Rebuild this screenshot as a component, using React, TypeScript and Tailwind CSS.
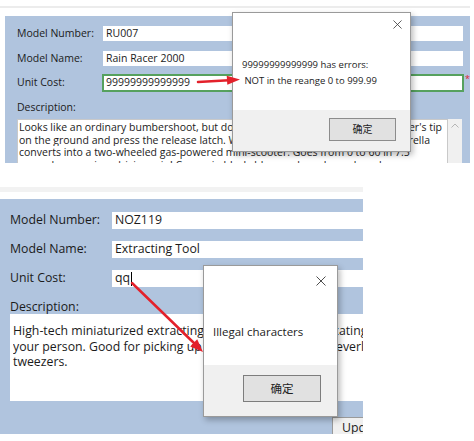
import React from 'react';

const CloseIcon = ({size}: {size: number}) => (
    <svg width={size} height={size} viewBox="0 0 10 10" className="block">
        <path d="M0.5 0.5L9.5 9.5M9.5 0.5L0.5 9.5" stroke="#3a3a3a" strokeWidth="0.9"/>
    </svg>
);

const TopField = ({label, value}: {label: string; value: string}) => (
    <div className="flex h-[15px] items-center">
        <span className="w-[86px] shrink-0">{label}</span>
        <div className="flex h-full w-[360px] items-center bg-white pl-[3px]">{value}</div>
    </div>
);

const BottomField = ({label, children}: {label: string; children: React.ReactNode}) => (
    <div className="flex h-[17px] items-center">
        <span className="w-[102px] shrink-0">{label}</span>
        <div className="flex h-full flex-1 items-center bg-white pl-[3px]">{children}</div>
    </div>
);

export default function App() {
    return (
        <div className="relative flex h-[441px] w-[474px] flex-col overflow-hidden bg-white font-['Open_Sans','Noto_Sans_CJK_SC',sans-serif] text-[#1b1b1b]">
            {/* first shot: range error */}
            <div className="relative flex h-[180px] shrink-0 flex-col">
                <div className="mt-[6px] h-[2px] w-[470px] bg-[#ececec]"/>
                <div className="ml-[5px] mt-[8px] h-[147px] w-[465px] overflow-hidden bg-[#b0c4de] pl-[12px] pt-[10px] text-[10.5px]">
                    <TopField label="Model Number:" value="RU007"/>
                    <div className="mt-[10px]"><TopField label="Model Name:" value="Rain Racer 2000"/></div>
                    <div className="mt-[8px] flex h-[18px] items-center">
                        <span className="w-[85px] shrink-0">Unit Cost:</span>
                        <div className="flex h-full w-[364px] items-center border-2 border-[#56a15e] bg-white pl-[2px]">99999999999999</div>
                        <span className="self-start pl-[1px] text-[9px] leading-[9px] text-[#e3212b]">*</span>
                    </div>
                    <div className="mt-[8px] h-[14px] leading-[14px]">Description:</div>
                    <div className="mt-[5px] flex h-[60px] w-[445px]">
                        <div className="w-[431px] border border-[#c9c9c9] bg-white pl-[1px] pr-[5px] pt-[1px] leading-[12.5px]">
                            <div className="flex whitespace-nowrap">
                                <span className="min-w-0 flex-1 overflow-hidden">Looks like an ordinary bumbershoot, but don't be fooled! Simply place Rain</span>
                                <span className="shrink-0">Racer's tip</span>
                            </div>
                            <div className="flex whitespace-nowrap pr-[12px]">
                                <span className="min-w-0 flex-1 overflow-hidden">on the ground and press the release latch. Within seconds, this ordinary rain</span>
                                <span className="shrink-0">umbrella</span>
                            </div>
                            <div className="overflow-hidden whitespace-nowrap">converts into a two-wheeled gas-powered mini-scooter. Goes from 0 to 60 in 7.5</div>
                            <div className="overflow-hidden whitespace-nowrap">seconds - even in a driving rain! Comes in black, blue, and candy-apple red.</div>
                        </div>
                        <div className="flex w-[14px] justify-center bg-[#f0f0f0] pt-[4px]">
                            <svg width="8" height="5" viewBox="0 0 8 5" className="block">
                                <path d="M0.5 4.5L4 1L7.5 4.5" fill="none" stroke="#b5b5b5" strokeWidth="1"/>
                            </svg>
                        </div>
                    </div>
                </div>

                <div className="absolute left-[232px] top-[12px] flex h-[140px] w-[179px] flex-col border border-[#9a9a9a] bg-white shadow-[2px_3px_6px_rgba(0,0,0,0.28)]">
                    <div className="flex justify-end pr-[8px] pt-[7px]"><CloseIcon size={9}/></div>
                    <div className="flex-1 whitespace-pre pl-[9px] pt-[28px] text-[9.5px] leading-[16px] text-[#222]">
                        <div>99999999999999 has errors:</div>
                        <div> NOT in the reange 0 to 999.99</div>
                    </div>
                    <div className="flex h-[41px] justify-end bg-[#f0f0f0] pr-[14px] pt-[8px]">
                        <button className="h-[23px] w-[67px] border border-[#8c8c8c] bg-[#e1e1e1] text-[10px] text-[#222]">确定</button>
                    </div>
                </div>
            </div>

            {/* second shot: illegal characters */}
            <div className="relative flex h-[261px] shrink-0 flex-col">
                <div className="mt-[7px] h-[5px] w-[363px] bg-[#f2f2f2]"/>
                <div className="mt-[7px] h-[235px] w-[363px] overflow-hidden bg-[#b0c4de] pl-[10px] pt-[13px] text-[12.3px]">
                    <BottomField label="Model Number:">NOZ119</BottomField>
                    <div className="mt-[12px]"><BottomField label="Model Name:">Extracting Tool</BottomField></div>
                    <div className="mt-[12px]">
                        <BottomField label="Unit Cost:">
                            qq<span className="ml-[1px] inline-block h-[14px] w-px bg-black"/>
                        </BottomField>
                    </div>
                    <div className="mt-[14px] h-[12px] leading-[12px]">Description:</div>
                    <div className="mt-[1px] h-[87px] w-[420px] bg-white pl-[3px] pt-[9px] leading-[15.5px]">
                        <div className="flex whitespace-nowrap">
                            <span className="w-[320px] shrink-0 overflow-hidden">High-tech miniaturized extracting tool. Excellent for extri</span>
                            <span className="shrink-0">cating foreign objects from</span>
                        </div>
                        <div className="flex whitespace-nowrap">
                            <span className="w-[323px] shrink-0 overflow-hidden">your person. Good for picking up really tiny stuff, too! Cl</span>
                            <span className="shrink-0">everly disguised as normal</span>
                        </div>
                        <div className="whitespace-nowrap">tweezers.</div>
                    </div>
                    <button className="ml-[322px] mt-[16px] flex h-[20px] w-[60px] items-start border border-[#9a9a9a] bg-[#f0f0f0] pl-[9px] pt-[1px]">Update</button>
                </div>

                <div className="absolute left-[203px] top-[85px] flex h-[152px] w-[135px] flex-col border border-[#9a9a9a] bg-white shadow-[2px_3px_6px_rgba(0,0,0,0.28)]">
                    <div className="flex justify-end pr-[11px] pt-[10px]"><CloseIcon size={10}/></div>
                    <div className="flex-1 pl-[9px] pt-[38px] text-[11.5px] leading-[16px] text-[#222]">Illegal characters</div>
                    <div className="flex h-[51px] justify-end bg-[#f0f0f0] pr-[16px] pt-[10px]">
                        <button className="h-[27px] w-[78px] border border-[#7d7d7d] bg-[#e1e1e1] text-[11.5px] text-[#222]">确定</button>
                    </div>
                </div>
            </div>

            {/* red annotation arrows */}
            <svg className="pointer-events-none absolute left-0 top-0" width="474" height="441" viewBox="0 0 474 441">
                <line x1="198" y1="82" x2="229" y2="80.2" stroke="#e3212b" strokeWidth="2.5" strokeLinecap="round"/>
                <polygon points="240,79.5 227.3,84.8 226.7,75.8" fill="#e3212b"/>
                <line x1="132" y1="283" x2="195" y2="344" stroke="#e3212b" strokeWidth="2.5" strokeLinecap="round"/>
                <polygon points="203,352 190.2,346.5 197.2,339.3" fill="#e3212b"/>
            </svg>
        </div>
    );
}
